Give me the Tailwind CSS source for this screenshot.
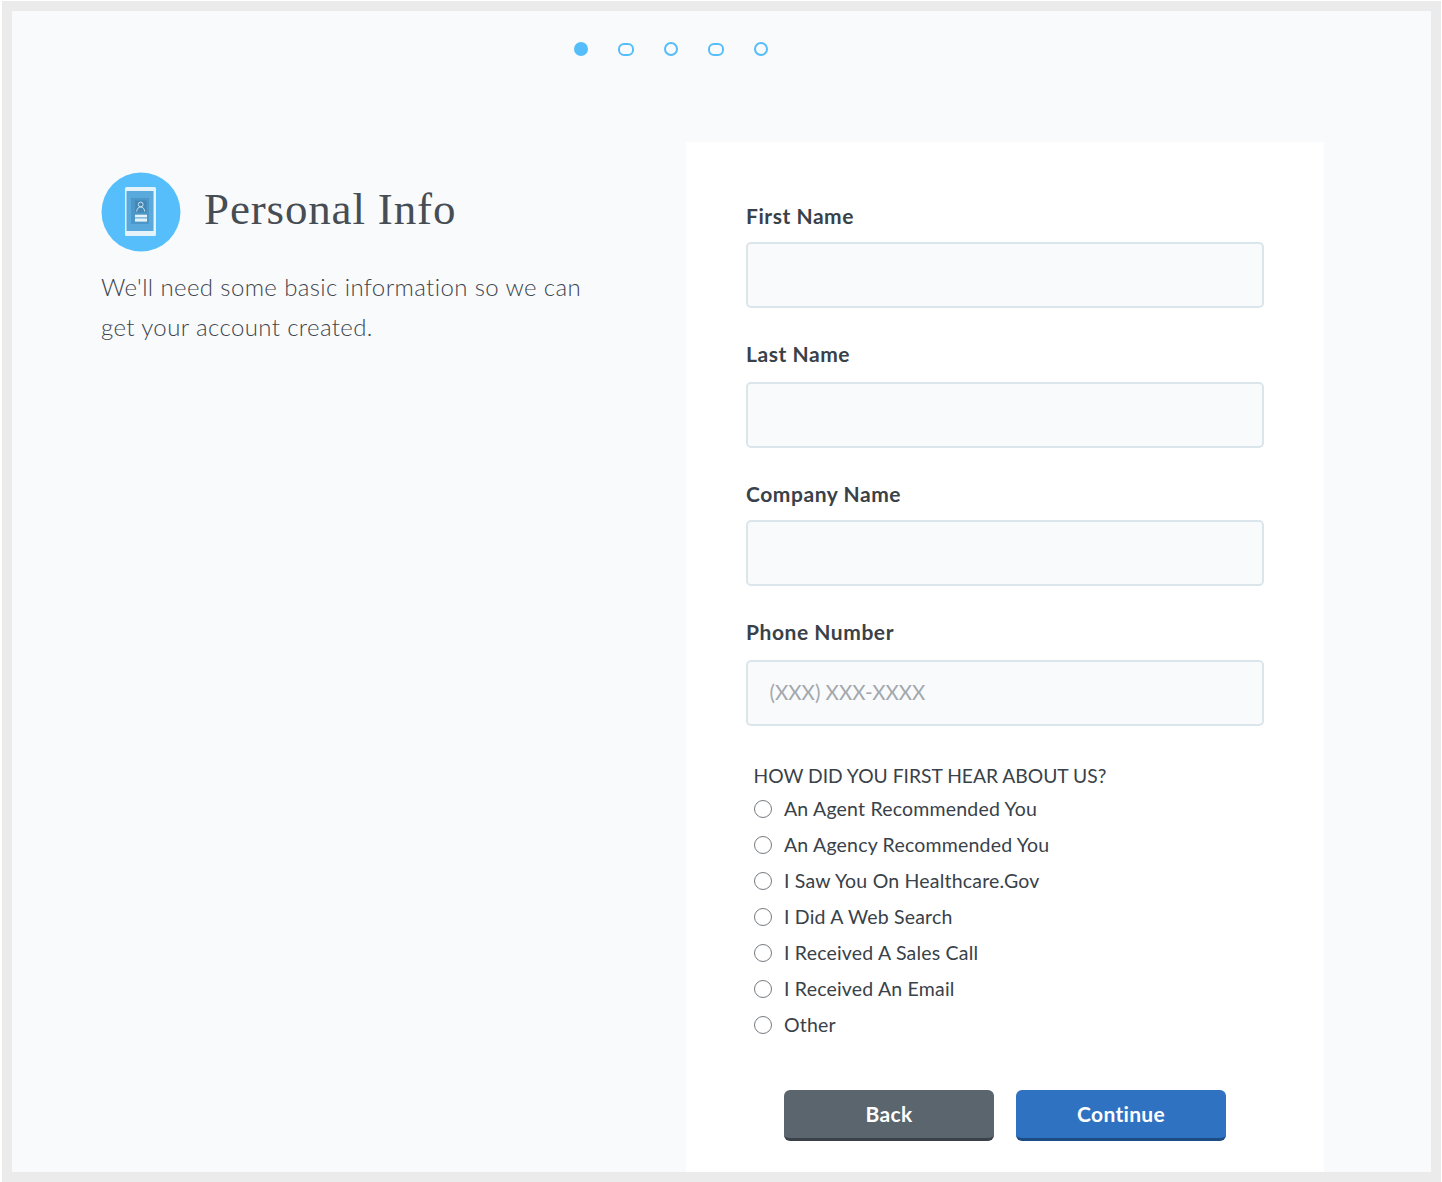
<!DOCTYPE html>
<html><head><meta charset="utf-8"><script src="https://cdn.jsdelivr.net/npm/@tailwindcss/browser@4"></script></head>
<body class="bg-white overflow-hidden font-['Lato',sans-serif]">
<div class="ml-[2px] mt-px w-[1439px] h-[1181px] border-10 border-[#ebebeb] bg-[#f9fafc] flex flex-col text-[#394149]">
  <div class="flex items-center h-[14px] mt-[31px] ml-[562px]">
    <span class="w-[14px] h-[14px] rounded-full bg-[#56bdfb] mr-[30px]"></span>
    <span class="w-4 h-[13px] rounded-[6px] border-2 border-[#56bdfb] mr-[30px]"></span>
    <span class="w-[14px] h-[14px] rounded-full border-2 border-[#56bdfb] mr-[30px]"></span>
    <span class="w-4 h-[13px] rounded-[6px] border-2 border-[#56bdfb] mr-[30px]"></span>
    <span class="w-[14px] h-[14px] rounded-full border-2 border-[#56bdfb]"></span>
  </div>
  <div class="flex flex-1 mt-[86px] min-h-0">
    <div class="w-[674px] pt-[30px] pl-[89px]">
      <div class="flex items-center gap-[23px]">
        <svg class="w-[80px] h-[80px]" viewBox="0 0 80 80">
          <circle cx="40" cy="40" r="39.5" fill="#56bffb"/>
          <rect x="24" y="15" width="31" height="49" rx="1.5" fill="#e4f2fa"/>
          <rect x="25.5" y="19" width="27" height="40" fill="#5aa9dc"/>
          <rect x="30" y="26" width="18" height="26" fill="#4c97c8"/>
          <rect x="34" y="28.5" width="11.5" height="12" fill="#4287b5"/>
          <circle cx="39.7" cy="32.5" r="2.4" fill="none" stroke="#d8ecf7" stroke-width="0.9"/>
          <path d="M35.7 39.5 q0.6 -4.5 4 -4.5 q3.4 0 4 4.5" fill="none" stroke="#d8ecf7" stroke-width="0.9"/>
          <rect x="34" y="42.7" width="12" height="2.7" fill="#e4f2fa"/>
          <rect x="34" y="46.4" width="12" height="3.2" fill="#e4f2fa"/>
        </svg>
        <h1 class="font-['Liberation_Serif',serif] text-[45px] leading-none font-normal text-[#464d54] -mt-[5px] tracking-[0.85px]">Personal Info</h1>
      </div>
      <p class="mt-[15px] w-[500px] text-[24px] leading-[40px] font-light tracking-[0.38px] text-[#3e454d]">We'll need some basic information so we can get your account created.</p>
    </div>
    <div class="w-[638px] bg-white pl-[60px] pr-[60px] flex flex-col">
      <label class="mt-[61px] text-[21px] leading-[26px] font-bold tracking-[0.55px]">First Name</label>
      <div class="mt-[13px] h-[66px] border-2 border-[#dbe6ec] rounded-[5px] bg-[#f9fafc]"></div>
      <label class="mt-[33px] text-[21px] leading-[26px] font-bold tracking-[0.55px]">Last Name</label>
      <div class="mt-[15px] h-[66px] border-2 border-[#dbe6ec] rounded-[5px] bg-[#f9fafc]"></div>
      <label class="mt-[33px] text-[21px] leading-[26px] font-bold tracking-[0.55px]">Company Name</label>
      <div class="mt-[13px] h-[66px] border-2 border-[#dbe6ec] rounded-[5px] bg-[#f9fafc]"></div>
      <label class="mt-[33px] text-[21px] leading-[26px] font-bold tracking-[0.55px]">Phone Number</label>
      <div class="mt-[15px] h-[66px] border-2 border-[#dbe6ec] rounded-[5px] bg-[#f9fafc] flex items-center pl-[21.5px] pb-[2px] text-[20.5px] text-[#a3a8ad]">(XXX) XXX-XXXX</div>
      <div class="mt-[36px] ml-[7.5px] text-[19.25px] leading-[28px]">HOW DID YOU FIRST HEAR ABOUT US?</div>
      <ul class="ml-2 mt-[1px] text-[19.5px] leading-[36px] tracking-[0.2px]">
        <li class="flex items-center gap-[12px]"><span class="w-[18px] h-[18px] rounded-full border-[1.5px] border-[#767b80]"></span>An Agent Recommended You</li>
        <li class="flex items-center gap-[12px]"><span class="w-[18px] h-[18px] rounded-full border-[1.5px] border-[#767b80]"></span>An Agency Recommended You</li>
        <li class="flex items-center gap-[12px]"><span class="w-[18px] h-[18px] rounded-full border-[1.5px] border-[#767b80]"></span>I Saw You On Healthcare.Gov</li>
        <li class="flex items-center gap-[12px]"><span class="w-[18px] h-[18px] rounded-full border-[1.5px] border-[#767b80]"></span>I Did A Web Search</li>
        <li class="flex items-center gap-[12px]"><span class="w-[18px] h-[18px] rounded-full border-[1.5px] border-[#767b80]"></span>I Received A Sales Call</li>
        <li class="flex items-center gap-[12px]"><span class="w-[18px] h-[18px] rounded-full border-[1.5px] border-[#767b80]"></span>I Received An Email</li>
        <li class="flex items-center gap-[12px]"><span class="w-[18px] h-[18px] rounded-full border-[1.5px] border-[#767b80]"></span>Other</li>
      </ul>
      <div class="mt-[47px] ml-[38px] flex gap-[22px]">
        <button class="w-[210px] h-[51px] rounded-[6px] bg-[#5b656e] border-b-[3px] border-[#3a4148] text-white text-[21px] font-bold tracking-[0.3px]">Back</button>
        <button class="w-[210px] h-[51px] rounded-[6px] bg-[#2f72c1] border-b-[3px] border-[#1d4c85] text-white text-[21px] font-bold tracking-[0.3px]">Continue</button>
      </div>
    </div>
  </div>
</div>
</body></html>
